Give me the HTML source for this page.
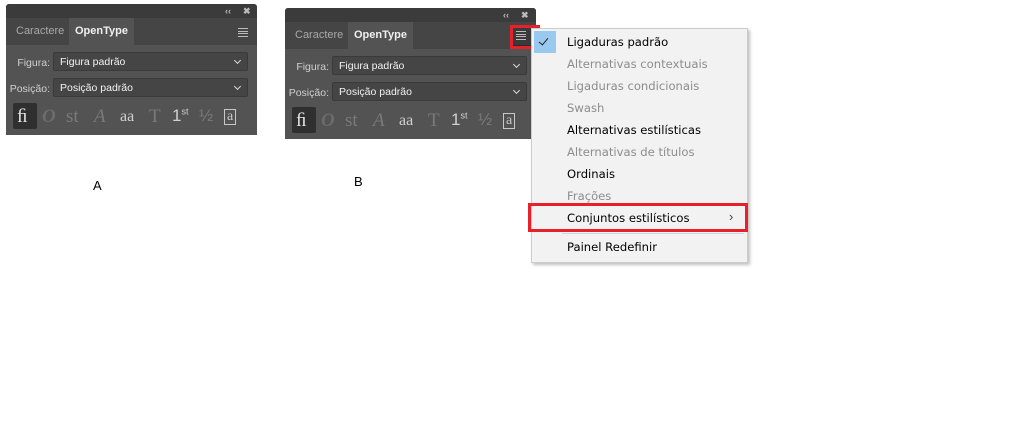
<!DOCTYPE html><html><head><style>
body{margin:0;width:1034px;height:423px;background:#fff;position:relative;overflow:hidden;font-family:"Liberation Sans",sans-serif}
.p{position:absolute;width:251px;height:131px;background:#535353;border-radius:3px 3px 0 0;overflow:hidden}
.tb{position:absolute;left:0;top:0;width:100%;height:14px;background:#3b3b3b}
.tabs{position:absolute;left:0;top:14px;width:100%;height:27px;background:#454545}
.t1{position:absolute;left:10px;top:21px;font-size:11px;color:#a8a8a8}
.t2{position:absolute;left:63px;top:14px;width:65px;height:27px;background:#535353;color:#f0f0f0;font-size:11px;font-weight:bold;line-height:27px;text-align:center}
.ham{position:absolute;left:232px;top:24px;width:10px;height:7px;border-top:1px solid #bbb;border-bottom:1px solid #bbb}
.ham:after{content:"";position:absolute;left:0;top:2px;width:10px;height:1px;background:#bbb;box-shadow:0 2px 0 #bbb}
.lb{position:absolute;font-size:10.5px;color:#cfcfcf;text-align:right;width:44px}
.dd{position:absolute;left:47px;width:195px;height:19px;background:#454545;border:1px solid #3a3a3a;border-radius:2px;color:#f2f2f2;font-size:10.5px;line-height:19px;padding-left:6px;box-sizing:border-box}
.dd:after{content:"";position:absolute;right:7px;top:5px;width:4px;height:4px;border-right:1.5px solid #ddd;border-bottom:1.5px solid #ddd;transform:rotate(45deg)}
.ic{position:absolute;top:102px;font-family:"Liberation Serif",serif;font-size:19px;color:#7a7a7a}
.sel{position:absolute;left:7px;top:99px;width:24px;height:26px;background:#2f2f2f;border-radius:2px}
.tt{position:absolute;top:2px;font-size:9px;color:#bbb;font-weight:bold}
.m{position:absolute;left:531px;top:28px;width:215px;height:233px;background:#f2f2f2;border:1px solid #ccc;box-shadow:2px 2px 3px rgba(0,0,0,.25)}
.mi{position:absolute;left:35px;color:#000;font-family:"DejaVu Sans","Liberation Sans",sans-serif;font-size:11.6px}
.g{color:#8d8d8d}
.red{position:absolute;border:3px solid #e8202a;box-sizing:border-box}
</style></head><body>

<div class="p" style="left:6px;top:4px">
<div class="tb"><span class="tt" style="left:219px">‹‹</span><span class="tt" style="left:237px">✖</span></div>
<div class="tabs"></div><div class="t1">Caractere</div><div class="t2">OpenType</div><div class="ham"></div>
<div class="lb" style="left:0;top:53px">Figura:</div><div class="dd" style="top:48px">Figura padrão</div>
<div class="lb" style="left:0;top:79px">Posição:</div><div class="dd" style="top:74px">Posição padrão</div>
<div class="sel"></div>
<span class="ic" style="left:11px;color:#e6e6e6">ﬁ</span>
<span class="ic" style="left:36px;font-style:italic;font-weight:bold;color:#6c6c6c">O</span>
<span class="ic" style="left:60px">st</span>
<span class="ic" style="left:88px;font-style:italic">A</span>
<span class="ic" style="left:114px;color:#d0d0d0;font-size:16px;top:104px">aa</span>
<span class="ic" style="left:143px">T</span>
<span class="ic" style="left:166px;color:#d0d0d0;font-family:'Liberation Sans';font-size:17px">1<sup style="font-size:9px">st</sup></span>
<span class="ic" style="left:193px;font-family:'Liberation Sans';font-size:17px">½</span>
<span class="ic" style="left:218px;color:#c8c8c8;font-size:14px;top:105px;border:1.5px solid #c8c8c8;padding:0 2px;line-height:14px">a</span>
</div>

<div class="p" style="left:285px;top:8px">
<div class="tb"><span class="tt" style="left:218px">‹‹</span><span class="tt" style="left:236px">✖</span></div>
<div class="tabs"></div><div class="t1">Caractere</div><div class="t2">OpenType</div>
<div style="position:absolute;left:227px;top:19px;width:18px;height:17px;background:#3a3a3a;border:1px solid #2a2a2a"></div><div class="ham" style="left:231px;top:23px"></div>
<div class="lb" style="left:0;top:53px">Figura:</div><div class="dd" style="top:48px">Figura padrão</div>
<div class="lb" style="left:0;top:79px">Posição:</div><div class="dd" style="top:74px">Posição padrão</div>
<div class="sel"></div>
<span class="ic" style="left:11px;color:#e6e6e6">ﬁ</span>
<span class="ic" style="left:36px;font-style:italic;font-weight:bold;color:#6c6c6c">O</span>
<span class="ic" style="left:60px">st</span>
<span class="ic" style="left:88px;font-style:italic">A</span>
<span class="ic" style="left:114px;color:#d0d0d0;font-size:16px;top:104px">aa</span>
<span class="ic" style="left:143px">T</span>
<span class="ic" style="left:166px;color:#d0d0d0;font-family:'Liberation Sans';font-size:17px">1<sup style="font-size:9px">st</sup></span>
<span class="ic" style="left:193px;font-family:'Liberation Sans';font-size:17px">½</span>
<span class="ic" style="left:218px;color:#c8c8c8;font-size:14px;top:105px;border:1.5px solid #c8c8c8;padding:0 2px;line-height:14px">a</span>
</div>
<div class="red" style="left:510px;top:25px;width:30px;height:24px"></div>

<div style="position:absolute;left:93px;top:178px;font-size:13px">A</div>
<div style="position:absolute;left:354px;top:174px;font-size:13px">B</div>

<div class="m">
<div style="position:absolute;left:2px;top:2px;width:22px;height:22px;background:#99c9ef"></div>
<div style="position:absolute;left:9px;top:7px;width:4px;height:8px;border-right:1.5px solid #222;border-bottom:1.5px solid #222;transform:rotate(40deg)"></div>
<div class="mi" style="top:6px">Ligaduras padrão</div>
<div class="mi g" style="top:28px">Alternativas contextuais</div>
<div class="mi g" style="top:50px">Ligaduras condicionais</div>
<div class="mi g" style="top:72px">Swash</div>
<div class="mi" style="top:94px">Alternativas estilísticas</div>
<div class="mi g" style="top:116px">Alternativas de títulos</div>
<div class="mi" style="top:138px">Ordinais</div>
<div class="mi g" style="top:160px">Frações</div>
<div class="mi" style="top:182px">Conjuntos estilísticos</div>
<div style="position:absolute;left:197px;top:180px;font-size:13px;color:#444">›</div>
<div style="position:absolute;left:30px;top:204px;width:182px;height:1px;background:#d5d5d5"></div>
<div class="mi" style="top:211px">Painel Redefinir</div>
</div>
<div class="red" style="left:528px;top:203px;width:220px;height:29px"></div>
</body></html>
